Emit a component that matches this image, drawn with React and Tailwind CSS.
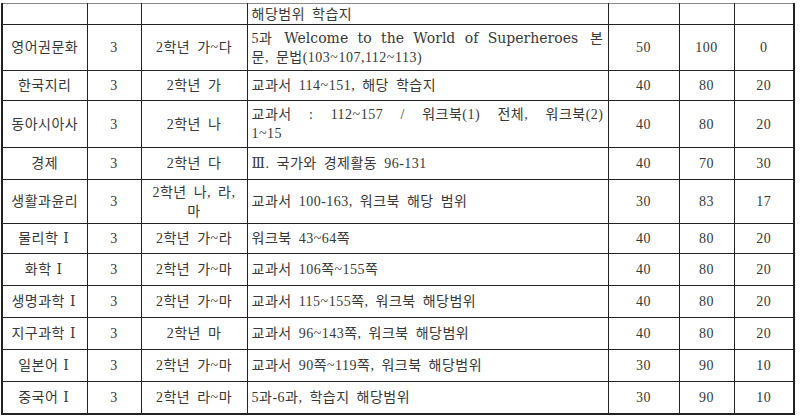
import React from 'react';

const rows = [
  { s: '', c: '', g: [''], r: ['해당범위 학습지'], a: '', b: '', d: '', h: 21 },
  { s: '영어권문화', c: '3', g: ['2학년 가~다'], r: ['5과 @ 본', '문, 문법(103~107,112~113)'], j: true, a: '50', b: '100', d: '0', h: 46 },
  { s: '한국지리', c: '3', g: ['2학년 가'], r: ['교과서 114~151, 해당 학습지'], a: '40', b: '80', d: '20', h: 30 },
  { s: '동아시아사', c: '3', g: ['2학년 나'], r: ['교과서 : 112~157 / 워크북(1) 전체, 워크북(2)', '1~15'], j: true, a: '40', b: '80', d: '20', h: 47 },
  { s: '경제', c: '3', g: ['2학년 다'], r: ['Ⅲ. 국가와 경제활동 96-131'], a: '40', b: '70', d: '30', h: 32 },
  { s: '생활과윤리', c: '3', g: ['2학년 나, 라,', '마'], r: ['교과서 100-163, 워크북 해당 범위'], a: '30', b: '83', d: '17', h: 44 },
  { s: '물리학Ⅰ', c: '3', g: ['2학년 가~라'], r: ['워크북 43~64쪽'], a: '40', b: '80', d: '20', h: 30 },
  { s: '화학Ⅰ', c: '3', g: ['2학년 가~마'], r: ['교과서 106쪽~155쪽'], a: '40', b: '80', d: '20', h: 32 },
  { s: '생명과학Ⅰ', c: '3', g: ['2학년 가~마'], r: ['교과서 115~155쪽, 워크북 해당범위'], a: '40', b: '80', d: '20', h: 32 },
  { s: '지구과학Ⅰ', c: '3', g: ['2학년 마'], r: ['교과서 96~143쪽, 워크북 해당범위'], a: '40', b: '80', d: '20', h: 32 },
  { s: '일본어Ⅰ', c: '3', g: ['2학년 가~마'], r: ['교과서 90쪽~119쪽, 워크북 해당범위'], a: '30', b: '90', d: '10', h: 32 },
  { s: '중국어Ⅰ', c: '3', g: ['2학년 라~마'], r: ['5과-6과, 학습지 해당범위'], a: '30', b: '90', d: '10', h: 32 },
];

const heights = {
  21: 'h-[21px]', 30: 'h-[30px]', 32: 'h-[32px]', 44: 'h-[44px]', 46: 'h-[46px]', 47: 'h-[47px]',
};

// the English title is set wider, like the original document's Latin glyphs
function Line({ text }) {
  if (!text.includes('@')) return text;
  const [before, after] = text.split('@');
  return (
    <>
      {before}
      <span className="font-['DejaVu_Serif'] tracking-normal [word-spacing:0px]">Welcome to the World of Superheroes</span>
      {after}
    </>
  );
}

// full-width roman numeral, as in the source document
function Subject({ name }) {
  if (!name.endsWith('Ⅰ')) return name;
  return (
    <>
      {name.slice(0, -1)}
      <span className="ml-[5px] mr-[2px]">Ⅰ</span>
    </>
  );
}

export default function App() {
  return (
    <div className="w-[800px] h-[420px] bg-white pl-[1px] pt-[3px] overflow-hidden">
      <table className="table-fixed border-collapse text-[14px] leading-[19px] tracking-[0.5px] [word-spacing:3px] text-[#383838] font-['Liberation_Serif','DejaVu_Serif','Noto_Sans_CJK_KR',serif]">
        <colgroup>
          <col className="w-[85px]" />
          <col className="w-[54px]" />
          <col className="w-[106px]" />
          <col className="w-[361px]" />
          <col className="w-[71px]" />
          <col className="w-[55px]" />
          <col className="w-[60px]" />
        </colgroup>
        <tbody>
          {rows.map((row, i) => {
            const last = i === rows.length - 1;
            const cell = `border border-[#222] p-0 align-middle ${heights[row.h]} ${i === 0 ? 'border-t-[#888]' : ''} ${last ? 'border-b-2' : ''}`;
            return (
              <tr key={i}>
                <td className={`${cell} border-l-2 text-center whitespace-nowrap`}>
                  <Subject name={row.s} />
                </td>
                <td className={`${cell} text-center`}>{row.c}</td>
                <td className={`${cell} text-center`}>
                  {row.g.map((t, k) => (
                    <div key={k}>{t}</div>
                  ))}
                </td>
                <td className={`${cell} px-[4px] text-left whitespace-nowrap`}>
                  {row.r.map((t, k) =>
                    row.j && k === 0 ? (
                      <div key={k} className="text-justify [text-align-last:justify] whitespace-normal">
                        <Line text={t} />
                      </div>
                    ) : (
                      <div key={k}>{t}</div>
                    )
                  )}
                </td>
                <td className={`${cell} text-center`}>{row.a}</td>
                <td className={`${cell} text-center`}>{row.b}</td>
                <td className={`${cell} border-r-2 text-center`}>{row.d}</td>
              </tr>
            );
          })}
        </tbody>
      </table>
    </div>
  );
}
